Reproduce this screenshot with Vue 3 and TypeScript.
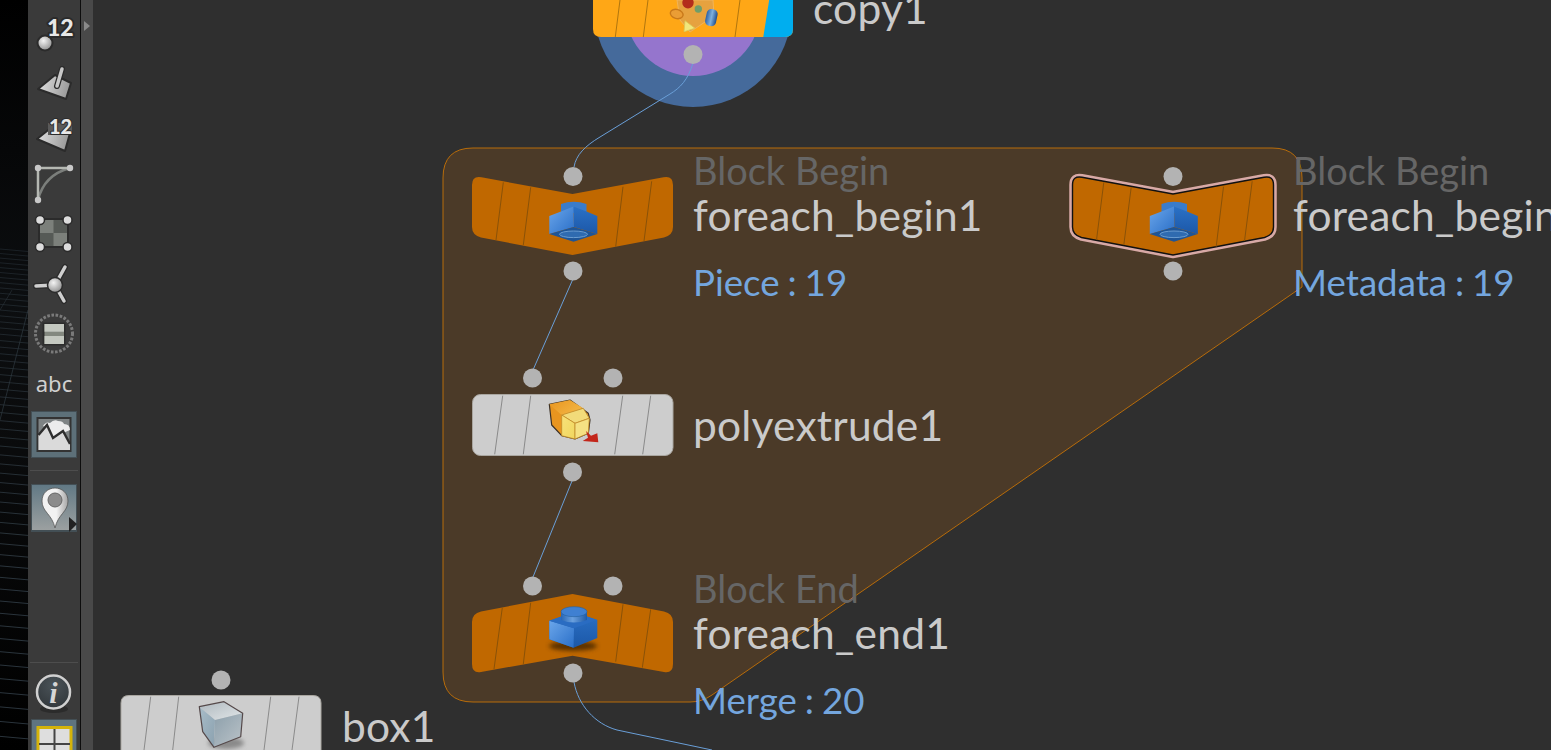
<script setup lang="ts">
interface Label { text: string; x: number; base: number; kind: 'name' | 'tag' | 'meta' }

const labels: Label[] = [
  { text: 'copy1', x: 813, base: 25, kind: 'name' },
  { text: 'Block Begin', x: 693, base: 185, kind: 'tag' },
  { text: 'foreach_begin1', x: 693, base: 232, kind: 'name' },
  { text: 'Piece : 19', x: 693, base: 297, kind: 'meta' },
  { text: 'Block Begin', x: 1293, base: 185, kind: 'tag' },
  { text: 'foreach_begin2', x: 1293, base: 232, kind: 'name' },
  { text: 'Metadata : 19', x: 1293, base: 297, kind: 'meta' },
  { text: 'polyextrude1', x: 693, base: 442, kind: 'name' },
  { text: 'Block End', x: 693, base: 603, kind: 'tag' },
  { text: 'foreach_end1', x: 693, base: 650, kind: 'name' },
  { text: 'Merge : 20', x: 693, base: 715, kind: 'meta' },
  { text: 'box1', x: 342, base: 743, kind: 'name' },
]

const sizes: Record<Label['kind'], number> = { name: 42.5, tag: 38, meta: 36.7 }

const dots: [number, number][] = [
  [693, 54.5], [573, 176.5], [573, 271], [532.5, 378], [613, 378], [572.5, 472],
  [532.5, 586], [613, 586], [573, 673], [1173, 176.5], [1173, 271], [221, 680],
]

const gridLines: { y: number; o: number }[] = []
let gy = 250
while (gy < 750) {
  gridLines.push({ y: gy, o: Math.min(0.9, 0.45 + (gy - 250) / 700) })
  gy += 4.5 + (gy - 250) * 0.022
}

function labelPos(l: Label) {
  return { left: `${l.x - 93}px`, top: `${l.base - 0.887 * sizes[l.kind]}px` }
}
</script>

<template>
  <div class="app">
    <div class="scene">
      <svg width="28" height="750" viewBox="0 0 28 750">
        <defs>
          <linearGradient id="sceneBg" x1="0" y1="0" x2="0" y2="1">
            <stop offset="0" stop-color="#000" />
            <stop offset="0.4" stop-color="#0c0e10" />
            <stop offset="0.6" stop-color="#0a0b0c" />
            <stop offset="1" stop-color="#000" />
          </linearGradient>
        </defs>
        <rect width="28" height="750" fill="url(#sceneBg)" />
        <line v-for="g in gridLines" :key="g.y" x1="0" :y1="g.y - 1" x2="28" :y2="g.y + 1.5" stroke="#2f3a42" :stroke-opacity="g.o" />
        <line x1="0" y1="420" x2="28" y2="310" stroke="#2f3a42" stroke-opacity="0.7" />
        <line x1="0" y1="310" x2="12" y2="290" stroke="#2f3a42" stroke-opacity="0.5" />
      </svg>
    </div>

    <div class="tools">
      <svg class="tool" viewBox="28 9 52 50">
        <defs>
          <radialGradient id="ball" cx="0.4" cy="0.35" r="0.7">
            <stop offset="0" stop-color="#f4f4f4" />
            <stop offset="1" stop-color="#8a8a8a" />
          </radialGradient>
          <linearGradient id="plate" x1="0" y1="0" x2="1" y2="0.2">
            <stop offset="0" stop-color="#e4e4e4" />
            <stop offset="1" stop-color="#9a9a9a" />
          </linearGradient>
          <linearGradient id="pinBox" x1="0" y1="0" x2="0" y2="1">
            <stop offset="0" stop-color="#607884" />
            <stop offset="1" stop-color="#9da1a1" />
          </linearGradient>
          <linearGradient id="pinBody" x1="0" y1="0" x2="1" y2="0">
            <stop offset="0" stop-color="#f2f2f2" />
            <stop offset="0.55" stop-color="#f2f2f2" />
            <stop offset="1" stop-color="#a5a5a5" />
          </linearGradient>
        </defs>
        <circle cx="45" cy="43" r="7.5" fill="url(#ball)" stroke="#2b2b2b" stroke-width="2" />
        <text x="47" y="36" class="count big">12</text>
      </svg>
      <svg class="tool" viewBox="28 59 52 50">
        <polygon points="38,89 55,75 71,83 66,99" fill="url(#plate)" stroke="#2b2b2b" stroke-width="2" stroke-linejoin="round" />
        <line x1="57" y1="86" x2="62" y2="69" stroke="#2b2b2b" stroke-width="6" stroke-linecap="round" />
        <line x1="57" y1="86" x2="62" y2="69" stroke="#c8c8c8" stroke-width="3.5" stroke-linecap="round" />
      </svg>
      <svg class="tool" viewBox="28 109 52 50">
        <polygon points="37,139 52,127 70,133 65,151" fill="url(#plate)" stroke="#2b2b2b" stroke-width="2" stroke-linejoin="round" />
        <rect x="48" y="123" width="24" height="12" fill="#5a5a5a" />
        <text x="49" y="134" class="count small">12</text>
      </svg>
      <svg class="tool" viewBox="28 159 52 50">
        <path d="M38,200 Q44,175 70,168" fill="none" stroke="#7b7e7b" stroke-width="2.5" />
        <path d="M38,200 V168 H70" fill="none" stroke="#b5b8b2" stroke-width="2.5" />
        <circle cx="38" cy="168" r="3.2" fill="#c8c8c8" />
        <circle cx="70" cy="168" r="3.2" fill="#c8c8c8" />
        <circle cx="38" cy="200" r="3.2" fill="#c8c8c8" />
      </svg>
      <svg class="tool" viewBox="28 209 52 50">
        <rect x="39" y="219" width="29" height="28" fill="#7c807b" stroke="#2b2b2b" stroke-width="2" />
        <rect x="53.5" y="220" width="13.5" height="13" fill="#565a56" />
        <rect x="40" y="233" width="13.5" height="13" fill="#565a56" />
        <g fill="#dcdcdc" stroke="#2b2b2b" stroke-width="1.5">
          <circle cx="40" cy="220" r="4.5" />
          <circle cx="67.5" cy="220" r="4.5" />
          <circle cx="40" cy="247" r="4.5" />
          <circle cx="67.5" cy="247" r="4.5" />
        </g>
      </svg>
      <svg class="tool" viewBox="28 259 52 50">
        <path d="M55,285 L65,267 M55,285 L36,286 M55,285 L64,301" stroke="#2b2b2b" stroke-width="6" stroke-linecap="round" />
        <path d="M55,285 L65,267 M55,285 L36,286 M55,285 L64,301" stroke="#cfcfcf" stroke-width="3.5" stroke-linecap="round" />
        <circle cx="55" cy="285" r="7.5" fill="url(#ball)" stroke="#2b2b2b" stroke-width="1.5" />
      </svg>
      <svg class="tool" viewBox="28 309 52 50">
        <circle cx="54" cy="333.5" r="18.5" fill="none" stroke="#7a7a7a" stroke-width="3" stroke-dasharray="2.6 1.6" />
        <rect x="42.5" y="322.5" width="23" height="23" fill="#2c2c2c" />
        <rect x="44.5" y="324" width="19.5" height="20" fill="#83887f" />
        <rect x="44.5" y="324" width="19.5" height="7.7" fill="#c4c8c0" />
        <rect x="44.5" y="336" width="19.5" height="8" fill="#c4c8c0" />
      </svg>
      <div class="abc">abc</div>
      <div class="tile">
        <svg width="46" height="47" viewBox="31 411 46 47">
          <rect x="31" y="411" width="46" height="47" fill="#5d7079" stroke="#434f55" stroke-width="2" />
          <rect x="37.5" y="418" width="33" height="33" fill="#7e8384" stroke="#333" stroke-width="2" />
          <path d="M43,426 Q46,421 50,423 Q54,419 58,421 Q63,421 64,424 Q70,424 70,430 L63,433 L53,438 L47,428 Z" fill="#ececec" />
          <path d="M38.5,435 L47,425 L53,438 L63,431 L70,444 V450 H38.5 Z" fill="#dadada" />
          <path d="M38.5,435 L47,425 L53,438 L63,431 L70,444" fill="none" stroke="#2e2e2e" stroke-width="2.4" />
        </svg>
      </div>
      <div class="rule first"></div>
      <div class="tile pin">
        <svg width="46" height="48" viewBox="31 484 46 48">
          <rect x="31" y="484" width="46" height="47" fill="url(#pinBox)" stroke="#434f55" stroke-width="2" />
          <path d="M55,528 C52,514 42,512 42,501 C42,493 48,488 55,488 C62,488 68,493 68,501 C68,512 58,514 55,528 Z" fill="url(#pinBody)" stroke="#555" stroke-width="0.8" />
          <circle cx="55" cy="500" r="7" fill="#8b8b8b" stroke="#666" />
          <polygon points="69,517 77,524 69,532" fill="#222" />
        </svg>
      </div>
      <div class="grow"></div>
      <div class="rule"></div>
      <svg class="tool info" viewBox="28 667 52 50">
        <defs>
          <radialGradient id="infoFill" cx="0.5" cy="0.3" r="0.8">
            <stop offset="0" stop-color="#4a5358" />
            <stop offset="1" stop-color="#2f3438" />
          </radialGradient>
        </defs>
        <ellipse cx="54" cy="709" rx="14" ry="4" fill="#222" opacity="0.6" />
        <circle cx="53.5" cy="692" r="16.5" fill="url(#infoFill)" stroke="#d0d0d0" stroke-width="2.5" />
        <text x="53.5" y="703" class="i-mark">i</text>
      </svg>
      <div class="tile last">
        <svg width="46" height="31" viewBox="31 719 46 31">
          <rect x="31" y="719" width="46" height="32" fill="#5f7480" stroke="#434f55" stroke-width="2" />
          <rect x="38" y="727.5" width="33" height="30" fill="#dedede" stroke="#d4b30a" stroke-width="3" />
          <path d="M54.5,729 V750 M39,744 H70" stroke="#444" stroke-width="2" />
        </svg>
      </div>
    </div>

    <div class="edge"></div>
    <div class="scroll"><span class="arrow"></span></div>

    <div class="canvas">
      <svg class="graph" width="1458" height="750" viewBox="93 0 1458 750">
        <defs>
          <path id="beginShape" d="M481.5,177.3 L572.5,194 L663.5,177.3 Q673,175.5 673,185 V227 Q673,235 664,237.5 L572.5,255 L481,237.5 Q472,235 472,227 V185 Q472,175.5 481.5,177.3 Z" />
          <path id="beginStripes" d="M503.3,182.3 L496,240 M530.7,187.3 L523.3,245 M623,186.7 L615.7,246.7 M651.7,181.3 L644,241" fill="none" stroke="#8a5208" stroke-width="1" />
          <linearGradient id="blockLeft" x1="0" y1="0" x2="1" y2="1">
            <stop offset="0" stop-color="#6ba6ea" />
            <stop offset="1" stop-color="#2a6fc8" />
          </linearGradient>
          <linearGradient id="blockRight" x1="0" y1="0" x2="0" y2="1">
            <stop offset="0" stop-color="#2b71c6" />
            <stop offset="1" stop-color="#1c58a8" />
          </linearGradient>
          <linearGradient id="cylSide" x1="0" y1="0" x2="1" y2="0">
            <stop offset="0" stop-color="#2866b4" />
            <stop offset="0.45" stop-color="#6aa0de" />
            <stop offset="1" stop-color="#1f5aa6" />
          </linearGradient>
          <g id="beginIcon">
            <path d="M561,204 Q573.5,199.5 586.5,204 V213 H561 Z" fill="#3a7ccb" />
            <polygon points="549.3,216 561,211.5 573.5,206.5 574,227 549.3,234" fill="url(#blockLeft)" />
            <polygon points="573.5,206.5 586.5,211.5 597.3,216 597.3,234 574,227" fill="url(#blockRight)" />
            <polygon points="549.3,234 573.5,227 597.3,234 573.5,241.7" fill="#1e5597" />
            <ellipse cx="573.5" cy="234.3" rx="14" ry="3.3" fill="#2f6bb0" stroke="#6a9cd0" />
          </g>
          <linearGradient id="copyBlue" x1="0" y1="0" x2="1" y2="0">
            <stop offset="0" stop-color="#2b62a8" />
            <stop offset="0.5" stop-color="#7fb0dc" />
            <stop offset="1" stop-color="#1e4e8f" />
          </linearGradient>
          <linearGradient id="cubeTop" x1="0" y1="0" x2="1" y2="1">
            <stop offset="0" stop-color="#aeb8be" />
            <stop offset="1" stop-color="#e2e6e8" />
          </linearGradient>
          <linearGradient id="cubeLeft" x1="0" y1="0" x2="1" y2="1">
            <stop offset="0" stop-color="#a8bcc8" />
            <stop offset="1" stop-color="#8ba1af" />
          </linearGradient>
          <linearGradient id="cubeRight" x1="0" y1="0" x2="1" y2="1">
            <stop offset="0" stop-color="#8c9fab" />
            <stop offset="1" stop-color="#bcc4c9" />
          </linearGradient>
          <linearGradient id="topFace" x1="0" y1="0" x2="1" y2="0.6">
            <stop offset="0" stop-color="#e8951f" />
            <stop offset="1" stop-color="#f3b544" />
          </linearGradient>
          <linearGradient id="yellowFace" x1="0" y1="0" x2="1" y2="1">
            <stop offset="0" stop-color="#f8e27a" />
            <stop offset="1" stop-color="#f0d65e" />
          </linearGradient>
          <filter id="soft" x="-30%" y="-60%" width="160%" height="220%">
            <feGaussianBlur stdDeviation="2" />
          </filter>
        </defs>

        <!-- network box -->
        <path d="M473,148 H1272 Q1302,148 1302,178 V287 L712,695 Q702,702 690,702 H473 Q443,702 443,672 V178 Q443,148 473,148 Z" fill="#4b3a28" stroke="#b86c0a" stroke-width="1" />

        <!-- copy1 -->
        <circle cx="693" cy="8" r="99" fill="#456a9b" />
        <circle cx="693" cy="8" r="68" fill="#9575cd" />
        <path d="M593,-10 H793 V29 Q793,37 785,37 H601 Q593,37 593,29 Z" fill="#ffa716" />
        <path d="M769.5,-2 L793,-2 V29 Q793,37 785,37 H763.3 Z" fill="#00aeef" />
        <path d="M620,0 L615.3,37 M648,0 L643.3,37 M740,0 L735,37" stroke="#b0760f" stroke-width="1" />
        <polygon points="677,0 713,0 714,16 690,32 680,20" fill="#e6a23f" stroke="#f0b766" stroke-width="0.8" />
        <ellipse cx="676.7" cy="14" rx="6.5" ry="4.5" fill="#ea9d35" stroke="#c9791a" stroke-width="1.4" transform="rotate(15 676.7 14)" />
        <circle cx="688" cy="2.7" r="5.7" fill="#b32d1c" />
        <circle cx="698.3" cy="9" r="3.7" fill="#6f9e6a" />
        <rect x="706" y="9" width="11" height="17" rx="4.5" fill="url(#copyBlue)" transform="rotate(12 711 17)" />
        <polygon points="685,20.7 695,28.3 684,31.7" fill="#f1e77c" stroke="#d9c655" stroke-width="0.8" />

        <!-- wires -->
        <g fill="none" stroke="#6a9fd8" stroke-width="1">
          <path d="M693,63 C688,80 680,88 670,94 L600,137 C585,146 576,155 574,167" />
          <path d="M572.5,280 L533,370" />
          <path d="M572,481 L533,577" />
          <path d="M574,682 C578,705 595,724 617,730 L712,750" />
        </g>

        <!-- foreach_begin1 -->
        <use href="#beginShape" fill="#c06800" />
        <use href="#beginStripes" />
        <use href="#beginIcon" />

        <!-- foreach_begin2 -->
        <g transform="translate(600.5 0)">
          <use href="#beginShape" fill="none" stroke="#d8a9a6" stroke-width="6.5" stroke-linejoin="round" />
          <use href="#beginShape" fill="#c06800" stroke="#111" stroke-width="1.4" />
          <use href="#beginStripes" />
          <use href="#beginIcon" />
        </g>

        <!-- polyextrude1 -->
        <rect x="472.5" y="394.5" width="200.5" height="61" rx="8" fill="#cdcdcd" stroke="#a9a6a0" />
        <path d="M502.7,395.7 L494.7,454.3 M530.7,395.7 L523.3,454.3 M622.7,395.7 L614.7,454.3 M650.7,395.7 L642.7,454.3" stroke="#8a8a8a" stroke-width="1" fill="none" />
        <polygon points="549.3,404.3 570,400 588.3,413.3 590,420 588.3,433.3 575,439 561.7,435.7 551.7,425" fill="#e8951f" stroke="#3a3026" stroke-width="1.2" stroke-linejoin="round" />
        <polygon points="549.3,404.3 570,400 583.3,408.3 561.7,415" fill="url(#topFace)" />
        <polygon points="561.7,415 583.3,408.3 589.3,418.3 575,423.3" fill="#f2db7a" stroke="#c08a2a" stroke-width="0.8" />
        <polygon points="561.7,415 575,423.3 575,439 561.7,435.7" fill="url(#yellowFace)" stroke="#c08a2a" stroke-width="0.8" />
        <polygon points="575,423.3 589.3,418.3 588.3,433.3 575,439" fill="#f5e183" stroke="#c08a2a" stroke-width="0.8" />
        <polygon points="582.7,441 598.3,442.3 597.3,433.3 591,435.7 586,431 588,437.7" fill="#c3261a" />

        <!-- foreach_end1 -->
        <path d="M481,611.5 L572.5,594 L664,611.5 Q673,613.5 673,622 V664 Q673,673.5 664,672 L572.5,655.7 L481,672 Q472,673.5 472,664 V622 Q472,613.5 481,611.5 Z" fill="#c06800" />
        <path d="M502.3,607.7 L494,669 M530.7,602.7 L523.3,664 M623,604.3 L615.7,661.7 M650.7,609.3 L642.3,667.7" fill="none" stroke="#8a5208" stroke-width="1" />
        <ellipse cx="573" cy="646" rx="24" ry="5" fill="#5c3300" filter="url(#soft)" />
        <polygon points="549.3,620.7 574,612 597.3,620 597.3,638 573.5,647.7 549.3,639.3" fill="url(#blockRight)" />
        <polygon points="549.3,620.7 574,628.3 573.5,647.7 549.3,639.3" fill="url(#blockLeft)" />
        <polygon points="549.3,620.7 574,612 597.3,620 574,628.3" fill="#2a6cc2" />
        <path d="M561,612 V620 Q574,625 587,620 V612 Z" fill="url(#cylSide)" />
        <ellipse cx="574" cy="611.7" rx="13" ry="5" fill="#3f80d2" stroke="#24609f" stroke-width="0.6" />

        <!-- box1 -->
        <path d="M121,760 V703 Q121,695.5 129,695.5 H313 Q321,695.5 321,703 V760 Z" fill="#cdcdcd" stroke="#a9a6a0" />
        <path d="M150.7,696.7 L144,750 M178.7,696.7 L172.7,750 M270.7,696.7 L264,750 M299,696.7 L292,750" stroke="#8a8a8a" stroke-width="1" fill="none" />
        <ellipse cx="226" cy="743" rx="18" ry="6" fill="#8a8a8a" filter="url(#soft)" />
        <polygon points="199.3,706.7 224,701.7 242.7,713.3 215,720" fill="url(#cubeTop)" />
        <polygon points="199.3,706.7 215,720 214,747.3 202.7,731.7" fill="url(#cubeLeft)" />
        <polygon points="215,720 242.7,713.3 240.7,736.7 214,747.3" fill="url(#cubeRight)" />
        <polygon points="199.3,706.7 224,701.7 242.7,713.3 240.7,736.7 214,747.3 202.7,731.7" fill="none" stroke="#55494a" stroke-width="1.2" stroke-linejoin="round" />

        <circle v-for="d in dots" :key="d[0] + '-' + d[1]" :cx="d[0]" :cy="d[1]" r="9.5" fill="#b3b3b3" />
      </svg>

      <span v-for="l in labels" :key="l.text + l.x" class="label" :class="l.kind" :style="labelPos(l)">{{ l.text }}</span>
    </div>
  </div>
</template>

<style scoped>
.app {
  display: flex;
  width: 1551px;
  height: 750px;
  overflow: hidden;
  background: #2f2f2f;
  font-family: Lato, "Noto Sans", sans-serif;
}
.scene {
  width: 28px;
  flex: none;
  background: #000;
}
.scene svg, .graph { display: block; }
.tools {
  width: 52px;
  flex: none;
  display: flex;
  flex-direction: column;
  padding-top: 9px;
  box-sizing: border-box;
  height: 750px;
  background: #3a3a3a;
}
.tool {
  display: block;
  flex: none;
  width: 52px;
  height: 50px;
}
.count {
  font-family: Lato, sans-serif;
  font-weight: 900;
  fill: #e8e8e8;
  stroke: #2b2b2b;
  paint-order: stroke;
  stroke-linejoin: round;
}
.count.big { font-size: 23px; stroke-width: 4px; }
.count.small { font-size: 20px; stroke-width: 2px; }
.i-mark {
  font-family: "Liberation Serif", serif;
  font-style: italic;
  font-weight: 700;
  font-size: 30px;
  fill: #d6d6d6;
  text-anchor: middle;
}
.abc {
  height: 50px;
  flex: none;
  box-sizing: border-box;
  padding-top: 10px;
  text-align: center;
  font-family: "Noto Sans", sans-serif;
  font-size: 22px;
  line-height: 28px;
  color: #cfcfcf;
}
.tile {
  flex: none;
  width: 46px;
  height: 47px;
  margin-left: 3px;
  margin-top: 2px;
}
.tile svg { display: block; }
.rule {
  flex: none;
  height: 1px;
  margin: 0 2px;
  background: #4d4d4d;
}
.rule.first { margin-top: 12px; }
.tile.pin { height: 48px; margin-top: 13px; }
.grow { flex: 1; min-height: 0; }
.info { margin-top: 4px; }
.tile.last { height: 31px; margin-top: 2px; }
.edge {
  width: 1px;
  flex: none;
  background: #0d0d0d;
}
.scroll {
  width: 12px;
  flex: none;
  background: #494949;
  padding-top: 21px;
  padding-left: 3px;
  box-sizing: border-box;
}
.arrow {
  display: block;
  width: 0;
  height: 0;
  border-left: 6px solid #8a8a8a;
  border-top: 5.5px solid transparent;
  border-bottom: 5.5px solid transparent;
}
.canvas {
  position: relative;
  flex: 1;
  overflow: hidden;
}
.graph {
  position: absolute;
  left: 0;
  top: 0;
}
.label {
  position: absolute;
  line-height: 1;
  white-space: nowrap;
}
.name { font-size: 42.5px; letter-spacing: 0.2px; color: #cacaca; }
.tag { font-size: 38px; color: #666666; }
.meta { font-size: 36.7px; word-spacing: -1.5px; color: #74a6de; }
</style>

<style>
html, body { margin: 0; background: #2f2f2f; overflow: hidden; }
</style>
